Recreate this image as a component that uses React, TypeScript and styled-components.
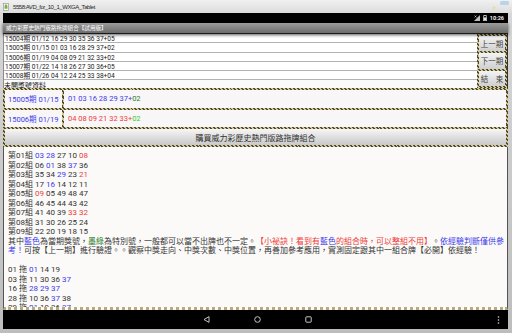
import React from 'react';
import styled, { createGlobalStyle, css } from 'styled-components';

const GlobalStyle = createGlobalStyle`
  html, body { margin: 0; padding: 0; width: 512px; height: 333px; overflow: hidden; background: #c8c8c8; }
  #root { width: 512px; height: 333px; }
  * { box-sizing: border-box; }
`;

const androidFont = `Roboto, "Noto Sans CJK TC", "Noto Sans", sans-serif`;

const dashed = css`
  border-style: solid;
  border-image: repeating-linear-gradient(45deg, #4c493a 0 1.4px, #d6c98e 1.4px 2.8px) 2;
`;

type Tone = 'blue' | 'red' | 'green' | 'lime' | undefined;
const toneColor: Record<string, string> = {
  blue: '#3b3bee',
  red: '#f03a3a',
  green: '#2d7d2d',
  lime: '#33cc33',
};

const Window = styled.div`
  width: 512px;
  height: 333px;
  display: flex;
  flex-direction: column;
  background: linear-gradient(#d8d8d8, #bdbdbd);
`;

const TitleBar = styled.div`
  height: 13px;
  flex: none;
  display: flex;
  align-items: center;
  justify-content: space-between;
  padding: 0 3px 0 3px;
  background: linear-gradient(#f1f1f1, #dcdcdc);
  font-family: "Liberation Sans", Arial, sans-serif;
  font-size: 6px;
  letter-spacing: -0.45px;
  color: #2a2a2a;
`;

const TitleLeft = styled.div`
  display: flex;
  align-items: center;
  gap: 4px;
`;

const Frame = styled.div`
  flex: 1;
  display: flex;
  padding: 0 4px 4px 3px;
  min-height: 0;
`;

const Screen = styled.div`
  flex: 1;
  display: flex;
  flex-direction: column;
  background: #000;
  min-width: 0;
  font-family: ${androidFont};
`;

const StatusBar = styled.div`
  height: 10px;
  flex: none;
  display: flex;
  align-items: center;
  justify-content: flex-end;
  gap: 3px;
  padding-right: 4px;
  background: #000;
  color: #f2f2f2;
  font-size: 5.5px;
  font-weight: 700;
`;

const ActionBar = styled.div`
  height: 11px;
  flex: none;
  display: flex;
  align-items: center;
  padding: 0 0 1px 3px;
  background: linear-gradient(#9c9c9c, #6c6c6c);
  border-bottom: 1px solid #1a1a1a;
  box-shadow: 0 1px 3px rgba(0, 0, 0, 0.65);
  color: #ffffff;
  font-size: 5.6px;
  position: relative;
  z-index: 1;
`;

const Top = styled.div`
  height: 54px;
  flex: none;
  display: flex;
`;

const HistoryList = styled.div`
  flex: 1;
  display: flex;
  flex-direction: column;
  background: #ffffff;
  border-left: 1px solid #8c8c8c;
`;

const HistoryRow = styled.div`
  height: 9.3px;
  flex: none;
  display: flex;
  align-items: center;
  padding-left: 1px;
  border-bottom: 1px solid #b2b2b2;
  font-size: 6.6px;
  color: #222;
  white-space: nowrap;
`;

const NoteRow = styled.div`
  flex: 1;
  display: flex;
  align-items: center;
  padding-left: 0;
  font-size: 7px;
  color: #222;
  background: #fafafa;
`;

const SideButtons = styled.div`
  width: 31px;
  flex: none;
  display: flex;
  flex-direction: column;
  background: #333;
  padding-right: 1px;
`;

const SideButton = styled.div`
  flex: 1;
  display: flex;
  align-items: center;
  justify-content: center;
  ${dashed};
  border-width: 2px 2px 0 2px;
  &:last-child { border-width: 2px; }
  background: linear-gradient(#f4f4f4, #cfcfcf);
  color: #444;
  font-size: 7.5px;
  white-space: nowrap;
`;

const DrawRow = styled.div`
  height: 19.5px;
  flex: none;
  display: grid;
  grid-template-columns: 59px 1fr;
  ${dashed};
  border-width: 2px 2px 0 2px;
  background: #f8f6f6;
  font-size: 7.5px;
`;

const PeriodCell = styled.div`
  display: flex;
  align-items: center;
  padding-left: 3px;
  ${dashed};
  border-width: 0 2px 0 0;
  color: ${toneColor.blue};
  white-space: nowrap;
`;

const NumberCell = styled.div`
  display: flex;
  align-items: center;
  padding-left: 4px;
  white-space: pre;
`;

const BuyButton = styled.div`
  height: 20px;
  flex: none;
  display: flex;
  align-items: center;
  justify-content: center;
  ${dashed};
  border-width: 2px;
  background: linear-gradient(#f6f6f6, #c9c9c9);
  color: #333;
  font-size: 8px;
`;

const Content = styled.div`
  flex: 1;
  min-height: 0;
  overflow: hidden;
  padding: 4px 0 0 4px;
  background: #fbfaf8;
  border-left: 1px solid #555;
  border-right: 1px solid #555;
  border-bottom: 3px dotted #b6aa7e;
  font-size: 8px;
  line-height: 9.5px;
  color: #333;
`;

const Line = styled.div`
  height: 9.5px;
  white-space: pre;
`;

const Tint = styled.span<{ $tone?: Tone }>`
  color: ${(p) => (p.$tone ? toneColor[p.$tone] : 'inherit')};
`;

const NavBar = styled.div`
  height: 19px;
  flex: none;
  display: grid;
  grid-template-columns: 1fr auto 1fr;
  align-items: center;
  background: #000;
`;

const NavCenter = styled.div`
  display: flex;
  align-items: center;
  gap: 44px;
  padding-left: 4px;
`;

const NavRight = styled.div`
  justify-self: end;
  padding-right: 8px;
  display: flex;
  align-items: center;
`;

type Seg = [string, Tone?];

const history = [
  '15004期 01/12 16 29 30 35 36 37+05',
  '15005期 01/15 01 03 16 28 29 37+02',
  '15006期 01/19 04 08 09 21 32 33+02',
  '15007期 01/22 14 18 26 27 30 36+05',
  '15008期 01/26 04 12 24 25 33 38+04',
];

const lines: Seg[][] = [
  [['第01組 '], ['03', 'blue'], [' '], ['28', 'blue'], [' 27 10 '], ['08', 'red']],
  [['第02組 06 '], ['01', 'blue'], [' 38 '], ['37', 'blue'], [' 36']],
  [['第03組 35 34 '], ['29', 'blue'], [' 23 '], ['21', 'red']],
  [['第04組 17 '], ['16', 'blue'], [' 14 12 11']],
  [['第05組 '], ['09', 'red'], [' 05 49 48 47']],
  [['第06組 46 45 44 43 42']],
  [['第07組 41 40 39 '], ['33', 'red'], [' '], ['32', 'red']],
  [['第08組 31 30 26 25 24']],
  [['第09組 22 20 19 18 15']],
  [
    ['其中'],
    ['藍色', 'blue'],
    ['為當期獎號，'],
    ['墨綠', 'green'],
    ['為特別號，一般都可以當不出牌也不一定。'],
    ['【小祕訣！看到有', 'red'],
    ['藍色', 'blue'],
    ['的組合時，可以整組不用】', 'red'],
    ['。'],
    ['依經驗判斷僅供參', 'blue'],
  ],
  [
    ['考！', 'blue'],
    ['可按【上一期】進行驗證。。觀察中獎走向、中獎次數、中獎位置，再善加參考應用，實測固定跟其中一組合牌【必開】依經驗！'],
  ],
  [[' ']],
  [['01 拖 '], ['01', 'blue'], [' 14 19']],
  [['03 拖 11 30 36 '], ['37', 'blue']],
  [['16 拖 '], ['28', 'blue'], [' '], ['29', 'blue'], [' '], ['37', 'blue']],
  [['28 拖 10 36 '], ['37', 'blue'], [' 38']],
  [['29 拖 '], ['01', 'blue'], [' 19 36 '], ['37', 'blue']],
];

const Segs: React.FC<{ segs: Seg[] }> = ({ segs }) => (
  <>
    {segs.map(([t, tone], i) => (
      <Tint key={i} $tone={tone}>
        {t}
      </Tint>
    ))}
  </>
);

const AppIcon = () => (
  <svg width="6" height="8" viewBox="0 0 6 8">
    <rect x="0.5" y="0.5" width="5" height="7" fill="#fafafa" stroke="#8a8a8a" strokeWidth="0.6" />
    <rect x="1.5" y="3.2" width="3" height="2.6" rx="0.6" fill="#7cb342" />
    <circle cx="3" cy="3" r="1.4" fill="#7cb342" />
  </svg>
);

const TitleDecor = () => (
  <svg width="18" height="12" viewBox="0 0 18 12">
    <circle cx="3" cy="7" r="1.4" fill="#e8dc9a" />
    <rect x="9" y="0" width="9" height="4" rx="1.5" fill="#b9d3ea" />
  </svg>
);

const SignalIcon = () => (
  <svg width="6" height="6" viewBox="0 0 6 6">
    <path d="M0 6 L6 0 L6 6 Z" fill="#bdbdbd" />
    <path d="M0.5 0.5 L2.5 2.5 M2.5 0.5 L0.5 2.5" stroke="#e0e0e0" strokeWidth="0.6" />
  </svg>
);

const BatteryIcon = () => (
  <svg width="4" height="6" viewBox="0 0 4 6">
    <rect x="1.2" y="0" width="1.6" height="0.8" fill="#e8e8e8" />
    <rect x="0.3" y="0.8" width="3.4" height="5" fill="none" stroke="#e8e8e8" strokeWidth="0.6" />
    <rect x="0.6" y="2.4" width="2.8" height="3.1" fill="#e8e8e8" />
  </svg>
);

const BackIcon = () => (
  <svg width="7" height="7" viewBox="0 0 7 7">
    <path d="M6 0.6 L6 6.4 L1 3.5 Z" fill="none" stroke="#d8d8d8" strokeWidth="0.9" strokeLinejoin="round" />
  </svg>
);

const HomeIcon = () => (
  <svg width="7" height="7" viewBox="0 0 7 7">
    <circle cx="3.5" cy="3.5" r="2.8" fill="none" stroke="#d8d8d8" strokeWidth="0.9" />
  </svg>
);

const RecentIcon = () => (
  <svg width="7" height="7" viewBox="0 0 7 7">
    <rect x="0.8" y="0.8" width="5.4" height="5.4" rx="0.5" fill="none" stroke="#d8d8d8" strokeWidth="0.9" />
  </svg>
);

const MenuIcon = () => (
  <svg width="3" height="8" viewBox="0 0 3 8">
    <circle cx="1.5" cy="1" r="0.8" fill="#d8d8d8" />
    <circle cx="1.5" cy="4" r="0.8" fill="#d8d8d8" />
    <circle cx="1.5" cy="7" r="0.8" fill="#d8d8d8" />
  </svg>
);

export default function App() {
  return (
    <>
      <GlobalStyle />
      <Window>
        <TitleBar>
          <TitleLeft>
            <AppIcon />
            <span>5558:AVD_for_10_1_WXGA_Tablet</span>
          </TitleLeft>
          <TitleDecor />
        </TitleBar>
        <Frame>
          <Screen>
            <StatusBar>
              <SignalIcon />
              <BatteryIcon />
              <span>10:26</span>
            </StatusBar>
            <ActionBar>威力彩歷史熱門版路拖牌組合【試用版】</ActionBar>
            <Top>
              <HistoryList>
                {history.map((h) => (
                  <HistoryRow key={h}>{h}</HistoryRow>
                ))}
                <NoteRow>未開獎號資料</NoteRow>
              </HistoryList>
              <SideButtons>
                <SideButton>上一期</SideButton>
                <SideButton>下一期</SideButton>
                <SideButton>結　束</SideButton>
              </SideButtons>
            </Top>
            <DrawRow>
              <PeriodCell>15005期 01/15</PeriodCell>
              <NumberCell>
                <Segs segs={[['01 03 16 28 29 37+', 'blue'], ['02', 'green']]} />
              </NumberCell>
            </DrawRow>
            <DrawRow>
              <PeriodCell>15006期 01/19</PeriodCell>
              <NumberCell>
                <Segs segs={[['04 08 09 21 32 33+', 'red'], ['02', 'lime']]} />
              </NumberCell>
            </DrawRow>
            <BuyButton>購買威力彩歷史熱門版路拖牌組合</BuyButton>
            <Content>
              {lines.map((segs, i) => (
                <Line key={i}>
                  <Segs segs={segs} />
                </Line>
              ))}
            </Content>
            <NavBar>
              <div />
              <NavCenter>
                <BackIcon />
                <HomeIcon />
                <RecentIcon />
              </NavCenter>
              <NavRight>
                <MenuIcon />
              </NavRight>
            </NavBar>
          </Screen>
        </Frame>
      </Window>
    </>
  );
}
